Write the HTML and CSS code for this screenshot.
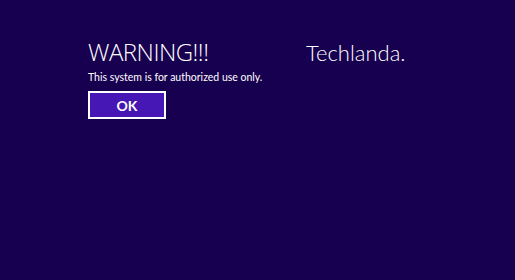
FILE: index.html
```html
<!DOCTYPE html>
<html lang="en">
<head>
  <meta charset="UTF-8">
  <title>Warning</title>
  <link rel="stylesheet" href="styles.css">
</head>
<body>
  <div class="notice">
    <div class="head-row">
      <h1 class="title">WARNING!!!</h1>
      <div class="brand">Techlanda.</div>
    </div>
    <p class="message">This system is for authorized use only.</p>
    <button class="ok-button">OK</button>
  </div>
</body>
</html>
```
FILE: styles.css
```css
body {
  margin: 0;
  background: #180050;
  color: white;
  font-family: Lato, "Open Sans", sans-serif;
  height: 280px;
}
.notice {
  padding: 36px 0 0 88px;
}
.head-row {
  display: flex;
  align-items: baseline;
}
.title {
  margin: 0;
  width: 218px;
  font-family: "Open Sans", sans-serif;
  font-size: 24px;
  font-weight: 300;
  letter-spacing: -0.5px;
  line-height: 32px;
}
.brand {
  font-size: 22px;
  font-weight: 300;
  line-height: 32px;
}
.message {
  margin: 0;
  font-size: 10.5px;
  line-height: 16px;
}
.ok-button {
  margin-top: 6px;
  width: 78px;
  height: 28px;
  background: #4617b4;
  border: 2px solid white;
  color: white;
  font-family: inherit;
  font-size: 14px;
  font-weight: 700;
  padding: 0;
}
```
